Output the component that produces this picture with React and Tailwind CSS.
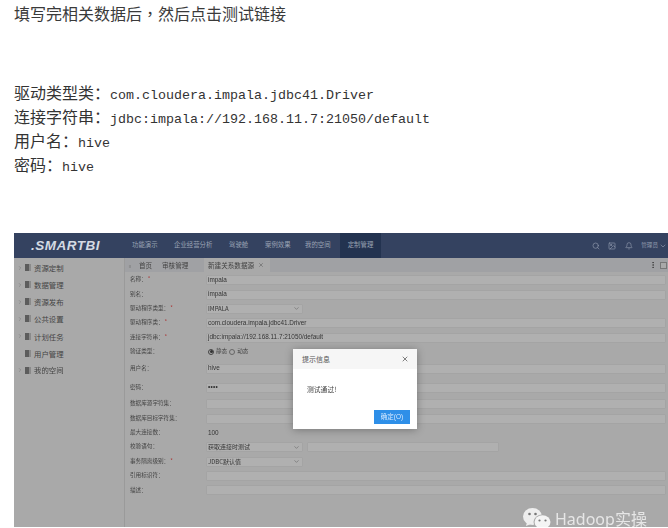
import React from "react";
import { Search, Bell, ChevronDown, ChevronRight, X, Image, EllipsisVertical } from "lucide-react";

const navItems = [
  { label: "功能演示", cls: "w-[28px] mr-[14px]" },
  { label: "企业经营分析", cls: "w-[41px] mr-[14px]" },
  { label: "驾驶舱", cls: "w-[22px] mr-[14px]" },
  { label: "案例效果", cls: "w-[26px] mr-[14px]" },
  { label: "我的空间", cls: "w-[28px] mr-[7px]" },
];

const sideItems = [
  { label: "资源定制", arrow: true, h: "h-[17px]" },
  { label: "数据管理", arrow: true, h: "h-[17px]" },
  { label: "资源发布", arrow: true, h: "h-[17px]" },
  { label: "公共设置", arrow: true, h: "h-[17.5px]" },
  { label: "计划任务", arrow: true, h: "h-[17.5px]" },
  { label: "用户管理", arrow: false, h: "h-[16.5px]" },
  { label: "我的空间", arrow: true, h: "h-[17px]" },
];

const rows = [
  { label: "名称：", star: true, kind: "input", value: "impala" },
  { label: "别名：", kind: "input", value: "impala" },
  { label: "驱动程序类型：", star: true, kind: "select", value: "IMPALA" },
  { label: "驱动程序类：", star: true, kind: "input", value: "com.cloudera.impala.jdbc41.Driver" },
  { label: "连接字符串：", star: true, kind: "input", value: "jdbc:impala://192.168.11.7:21050/default" },
  { label: "验证类型：", kind: "radio" },
  { label: "用户名：", kind: "input", value: "hive", h: "h-[19px]" },
  { label: "密码：", kind: "input", value: "••••", h: "h-[19px]", bold: true },
  { label: "数据库源字符集：", kind: "input" },
  { label: "数据库目标字符集：", kind: "input" },
  { label: "最大连接数：", kind: "text", value: "100" },
  { label: "校验语句：", kind: "check", value: "获取连接时测试" },
  { label: "事务隔离级别：", star: true, kind: "select", value: "JDBC默认值" },
  { label: "引用标识符：", kind: "input" },
  { label: "描述：", kind: "input" },
];

function SelectBox({ value }) {
  return (
    <div className="w-[97px] h-[10px] shrink-0 flex items-center justify-between px-[1px] bg-[#b0b0b0] border border-[#a4a4a4] rounded-[1px]">
      <span className="text-[6px] leading-none text-[#333]">{value}</span>
      <ChevronDown size={7} className="text-[#666] mr-[1px]" />
    </div>
  );
}

function FormRow({ row }) {
  return (
    <div className={`flex items-center ${row.h || "h-[14.35px]"}`}>
      <div className="w-[81px] pl-[5px] shrink-0 text-[5.6px] leading-none text-[#444] whitespace-nowrap">
        {row.label}
        {row.star && <span className="text-[#a33] ml-[1px]">*</span>}
      </div>
      {row.kind === "input" && (
        <div className={`flex-1 h-[10px] flex items-center px-[1px] bg-[#b0b0b0] border border-[#a4a4a4] rounded-[1px] font-['Liberation_Sans',sans-serif] text-[6.4px] leading-none text-[#333] ${row.bold ? "font-bold tracking-[0.3px]" : ""}`}>
          {row.value}
        </div>
      )}
      {row.kind === "select" && <SelectBox value={row.value} />}
      {row.kind === "check" && (
        <>
          <SelectBox value={row.value} />
          <div className="w-[192px] h-[10px] ml-[4px] bg-[#b0b0b0] border border-[#a4a4a4] rounded-[1px]" />
        </>
      )}
      {row.kind === "text" && <div className="px-[2px] font-['Liberation_Sans',sans-serif] text-[6.4px] leading-none text-[#333]">{row.value}</div>}
      {row.kind === "radio" && (
        <div className="flex items-center pl-[2px] text-[5.6px] leading-none text-[#444]">
          <span className="w-[6px] h-[6px] rounded-full border border-[#444] flex items-center justify-center mr-[2px]">
            <span className="w-[3px] h-[3px] rounded-full bg-[#333]" />
          </span>
          静态
          <span className="w-[6px] h-[6px] rounded-full border border-[#666] mx-[2px]" />
          动态
        </div>
      )}
    </div>
  );
}

function WeChatLogo() {
  return (
    <svg width="29" height="20" viewBox="0 0 29 20" className="shrink-0">
      <ellipse cx="9.5" cy="8.5" rx="9.5" ry="8.5" fill="#eeeeee" />
      <path d="M4 14l-1 4 5-2z" fill="#eeeeee" />
      <circle cx="6.5" cy="6" r="1.3" fill="#777" />
      <circle cx="12.5" cy="6" r="1.3" fill="#777" />
      <ellipse cx="19.5" cy="14" rx="9" ry="7.5" fill="#a9a9a9" />
      <ellipse cx="19.5" cy="14" rx="8" ry="6.8" fill="#f4f4f4" />
      <circle cx="16.5" cy="12.5" r="1.1" fill="#777" />
      <circle cx="22.5" cy="12.5" r="1.1" fill="#777" />
    </svg>
  );
}

export default function App() {
  return (
    <div className="w-[668px] h-[528px] overflow-hidden bg-white font-['Noto_Sans_CJK_SC',sans-serif]">
      <p className="pl-[14px] h-[28px] text-[16px] leading-[26px] text-[#3a3a3a]">
        填写完相关数据后<span className="font-['Noto_Sans_CJK_TC',sans-serif]">，</span>然后点击测试链接
      </p>

      <div className="mt-[52px] pl-[14px] text-[16px] leading-[24px] text-[#333]">
        <p className="h-[24px]">驱动类型类：<span className="font-['Liberation_Mono',monospace] text-[13.33px] leading-none">com.cloudera.impala.jdbc41.Driver</span></p>
        <p className="h-[24px]">连接字符串：<span className="font-['Liberation_Mono',monospace] text-[13.33px] leading-none">jdbc:impala://192.168.11.7:21050/default</span></p>
        <p className="h-[24px]">用户名：<span className="font-['Liberation_Mono',monospace] text-[13.33px] leading-none">hive</span></p>
        <p className="h-[24px]">密码：<span className="font-['Liberation_Mono',monospace] text-[13.33px] leading-none">hive</span></p>
      </div>

      {/* Screenshot of the Smartbi data source page */}
      <div className="relative mt-[57px] ml-[14px] w-[654px] h-[294px] overflow-hidden bg-[#a9a9a9]">
        <div className="blur-[0.55px] h-full flex flex-col">
          <div className="h-[25px] shrink-0 flex items-center bg-[#344260] text-[#9aa3b4] text-[6.4px] leading-none">
            <div className="w-[118px] pl-[17px] shrink-0 font-['Liberation_Sans',sans-serif] font-bold italic text-[13.5px] tracking-[0.5px] text-[#d5dae3]">
              .SMARTBI
            </div>
            {navItems.map((item) => (
              <div key={item.label} className={`${item.cls} whitespace-nowrap shrink-0`}>{item.label}</div>
            ))}
            <div className="w-[41px] h-full shrink-0 flex items-center justify-center bg-[#233350]">定制管理</div>
            <div className="flex-1 flex items-center justify-end pr-[1px] text-[#8f99ac]">
              <Search size={8} className="mr-[8px]" />
              <Image size={8} className="mr-[9px]" />
              <Bell size={8} className="mr-[8px]" />
              <span className="text-[5.6px] whitespace-nowrap">管理员</span>
              <ChevronDown size={8} className="ml-[1px]" />
            </div>
          </div>

          <div className="flex flex-1 min-h-0">
            <div className="w-[111px] shrink-0 pt-[1px] border-r border-[#9a9a9a] bg-[#a9a9a9]">
              {sideItems.map((item) => (
                <div key={item.label} className={`flex items-center ${item.h}`}>
                  <div className="w-[11px] shrink-0 flex justify-center">
                    {item.arrow && <ChevronRight size={6} className="text-[#777]" />}
                  </div>
                  <div className="w-[6px] h-[7px] shrink-0 mr-[3px] bg-[#5c5c5c] border-r-2 border-[#8a8a8a]" />
                  <span className="text-[7.4px] leading-none text-[#444] whitespace-nowrap">{item.label}</span>
                </div>
              ))}
            </div>

            <div className="flex-1 min-w-0 flex flex-col">
              <div className="h-[14px] shrink-0 flex items-center bg-[#a0a1a4] text-[6.6px] leading-none text-[#444]">
                <span className="w-[13px] pl-[3px] text-[5px] text-[#777]">॥</span>
                <span className="w-[23px] pl-[1px]">首页</span>
                <span className="w-[43px] pl-[1px] whitespace-nowrap">审核管理</span>
                <div className="w-[66px] h-full flex items-center pl-[4px] bg-[#a9a9a9] whitespace-nowrap">
                  新建关系数据源
                  <X size={6} className="ml-[4px] text-[#555]" />
                </div>
                <div className="flex-1 flex items-center justify-end pr-[1px]">
                  <EllipsisVertical size={8} className="mr-[3px] text-[#333]" />
                  <div className="w-[7px] h-[7px] border border-[#777] bg-[#a9a9a9]" />
                </div>
              </div>

              <div className="pt-[1px] pr-[2px]">
                {rows.map((row) => (
                  <FormRow key={row.label} row={row} />
                ))}
              </div>
            </div>
          </div>

          {/* Dialog */}
          <div className="absolute left-[279px] top-[116px] w-[124px] h-[80px] flex flex-col bg-white shadow-[0_1px_8px_rgba(0,0,0,0.3)]">
            <div className="h-[20px] shrink-0 flex items-center justify-between pl-[9px] pr-[8px] bg-[#f6f6f6] text-[7px] leading-none text-[#555]">
              提示信息
              <X size={8} className="text-[#444]" />
            </div>
            <div className="flex-1 pl-[14px] pt-[17px] text-[6.8px] leading-none text-[#444]">测试通过!</div>
            <div className="self-end mr-[7px] mb-[5px] w-[36px] h-[14px] flex items-center justify-center bg-[#2e8fe8] font-['Liberation_Sans','Noto_Sans_CJK_SC',sans-serif] text-[6.5px] leading-none text-[#d8eaff]">
              确定(O)
            </div>
          </div>
        </div>

        {/* Watermark */}
        <div className="absolute left-[509px] top-[275px] flex items-start">
          <WeChatLogo />
          <span className="ml-[3px] -mt-[3px] font-['Noto_Sans',sans-serif] text-[16px] leading-[26px] text-[#e6e6e6] whitespace-nowrap">
            Hadoop<span className="font-['Noto_Sans_CJK_SC',sans-serif]">实操</span>
          </span>
        </div>
      </div>
    </div>
  );
}
